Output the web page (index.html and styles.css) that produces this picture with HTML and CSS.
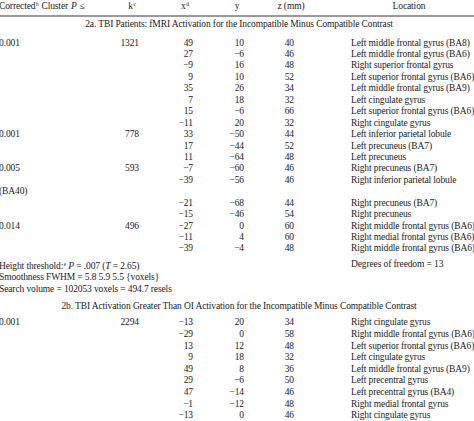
FILE: index.html
```html
<!DOCTYPE html>
<html>
<head>
<meta charset="utf-8">
<link rel="stylesheet" href="styles.css">
</head>
<body>
<div class="sheet">
  <div class="head">
    <div class="h1">Corrected<span class="sup">b</span> Cluster <i>P</i> ≤</div>
    <div class="hc">k<span class="sup">c</span></div>
    <div class="hc">x<span class="sup">d</span></div>
    <div class="hc">y</div>
    <div class="hc">z (mm)</div>
    <div class="hc">Location</div>
  </div>
  <div class="rule"></div>

  <div class="title title-a">2a. TBI Patients: fMRI Activation for the Incompatible Minus Compatible Contrast</div>

  <div class="rows rows-a">
    <div class="row"><span>0.001</span><span class="n">1321</span><span class="n">49</span><span class="n">10</span><span class="n">40</span><span class="loc">Left middle frontal gyrus (BA8)</span></div>
    <div class="row"><span></span><span></span><span class="n">27</span><span class="n">−6</span><span class="n">46</span><span class="loc">Left middle frontal gyrus (BA6)</span></div>
    <div class="row"><span></span><span></span><span class="n">−9</span><span class="n">16</span><span class="n">48</span><span class="loc">Right superior frontal gyrus</span></div>
    <div class="row"><span></span><span></span><span class="n">9</span><span class="n">10</span><span class="n">52</span><span class="loc">Left superior frontal gyrus (BA6)</span></div>
    <div class="row"><span></span><span></span><span class="n">35</span><span class="n">26</span><span class="n">34</span><span class="loc">Left middle frontal gyrus (BA9)</span></div>
    <div class="row"><span></span><span></span><span class="n">7</span><span class="n">18</span><span class="n">32</span><span class="loc">Left cingulate gyrus</span></div>
    <div class="row"><span></span><span></span><span class="n">15</span><span class="n">−6</span><span class="n">66</span><span class="loc">Left superior frontal gyrus (BA6)</span></div>
    <div class="row"><span></span><span></span><span class="n">−11</span><span class="n">20</span><span class="n">32</span><span class="loc">Right cingulate gyrus</span></div>
    <div class="row"><span>0.001</span><span class="n">778</span><span class="n">33</span><span class="n">−50</span><span class="n">44</span><span class="loc">Left inferior parietal lobule</span></div>
    <div class="row"><span></span><span></span><span class="n">17</span><span class="n">−44</span><span class="n">52</span><span class="loc">Left precuneus (BA7)</span></div>
    <div class="row"><span></span><span></span><span class="n">11</span><span class="n">−64</span><span class="n">48</span><span class="loc">Left precuneus</span></div>
    <div class="row"><span>0.005</span><span class="n">593</span><span class="n">−7</span><span class="n">−60</span><span class="n">46</span><span class="loc">Right precuneus (BA7)</span></div>
    <div class="row"><span></span><span></span><span class="n">−39</span><span class="n">−56</span><span class="n">46</span><span class="loc">Right inferior parietal lobule</span></div>
    <div class="row"><span>(BA40)</span></div>
    <div class="row"><span></span><span></span><span class="n">−21</span><span class="n">−68</span><span class="n">44</span><span class="loc">Right precuneus (BA7)</span></div>
    <div class="row"><span></span><span></span><span class="n">−15</span><span class="n">−46</span><span class="n">54</span><span class="loc">Right precuneus</span></div>
    <div class="row"><span>0.014</span><span class="n">496</span><span class="n">−27</span><span class="n">0</span><span class="n">60</span><span class="loc">Right middle frontal gyrus (BA6)</span></div>
    <div class="row"><span></span><span></span><span class="n">−11</span><span class="n">4</span><span class="n">60</span><span class="loc">Right medial frontal gyrus (BA6)</span></div>
    <div class="row"><span></span><span></span><span class="n">−39</span><span class="n">−4</span><span class="n">48</span><span class="loc">Right middle frontal gyrus (BA6)</span></div>
  </div>

  <div class="rows notes">
    <div class="row"><span class="note">Height threshold:<span class="sup">e</span> <i>P</i> = .007 (<i>T</i> = 2.65)</span><span class="loc dof">Degrees of freedom = 13</span></div>
    <div class="row"><span class="note">Smoothness FWHM = 5.8 5.9 5.5 {voxels}</span></div>
    <div class="row"><span class="note">Search volume = 102053 voxels = 494.7 resels</span></div>
  </div>

  <div class="title title-b">2b. TBI Activation Greater Than OI Activation for the Incompatible Minus Compatible Contrast</div>

  <div class="rows rows-b">
    <div class="row"><span>0.001</span><span class="n">2294</span><span class="n">−13</span><span class="n">20</span><span class="n">34</span><span class="loc">Right cingulate gyrus</span></div>
    <div class="row"><span></span><span></span><span class="n">−29</span><span class="n">0</span><span class="n">58</span><span class="loc">Right middle frontal gyrus (BA6)</span></div>
    <div class="row"><span></span><span></span><span class="n">13</span><span class="n">12</span><span class="n">48</span><span class="loc">Left superior frontal gyrus (BA6)</span></div>
    <div class="row"><span></span><span></span><span class="n">9</span><span class="n">18</span><span class="n">32</span><span class="loc">Left cingulate gyrus</span></div>
    <div class="row"><span></span><span></span><span class="n">49</span><span class="n">8</span><span class="n">36</span><span class="loc">Left middle frontal gyrus (BA9)</span></div>
    <div class="row"><span></span><span></span><span class="n">29</span><span class="n">−6</span><span class="n">50</span><span class="loc">Left precentral gyrus</span></div>
    <div class="row"><span></span><span></span><span class="n">47</span><span class="n">−14</span><span class="n">46</span><span class="loc">Left precentral gyrus (BA4)</span></div>
    <div class="row"><span></span><span></span><span class="n">−1</span><span class="n">−12</span><span class="n">48</span><span class="loc">Right medial frontal gyrus</span></div>
    <div class="row"><span></span><span></span><span class="n">−13</span><span class="n">0</span><span class="n">46</span><span class="loc">Right cingulate gyrus</span></div>
  </div>
</div>
</body>
</html>
```

FILE: styles.css
```css
html, body {
  margin: 0;
  padding: 0;
  background: #ffffff;
  overflow: hidden;
}

body {
  width: 474px;
  height: 421px;
}

.sheet {
  margin-left: -1px;
  width: 560px;
  font-family: "Liberation Serif", "Times New Roman", serif;
  font-size: 9.5px;
  letter-spacing: -0.12px;
  color: #1c1a1b;
  white-space: nowrap;
}

.head {
  display: grid;
  grid-template-columns: 110px 46px 60px 44px 64px 172px;
  height: 12px;
  line-height: 12px;
}

.h1 {
  word-spacing: 0.6px;
}

.hc {
  text-align: center;
}

.sup {
  font-size: 5.6px;
  line-height: 0;
  vertical-align: 3px;
  margin-left: 0.5px;
}

.rule {
  margin-top: 3px;
  width: 560px;
  border-top: 2px solid #999999;
}

.title {
  width: 480px;
  text-align: center;
  height: 11.45px;
  line-height: 11.45px;
}

.title-a {
  margin-top: 2.3px;
}

.title-b {
  margin-top: 5.65px;
}

.rows-a {
  margin-top: 6.85px;
}

.notes {
  margin-top: 5.85px;
}

.rows-b {
  margin-top: 5.25px;
}

.row {
  display: grid;
  grid-template-columns: 101px 39px 54px 51px 50px 257px;
  height: 11.45px;
  line-height: 11.45px;
}

.rows-b .row {
  height: 11.6px;
  line-height: 11.6px;
}

.n {
  text-align: right;
}

.loc {
  padding-left: 57px;
}

.note {
  grid-column: 1 / 6;
}

.dof {
  grid-column: 6;
  position: relative;
  top: -1.5px;
}
```
